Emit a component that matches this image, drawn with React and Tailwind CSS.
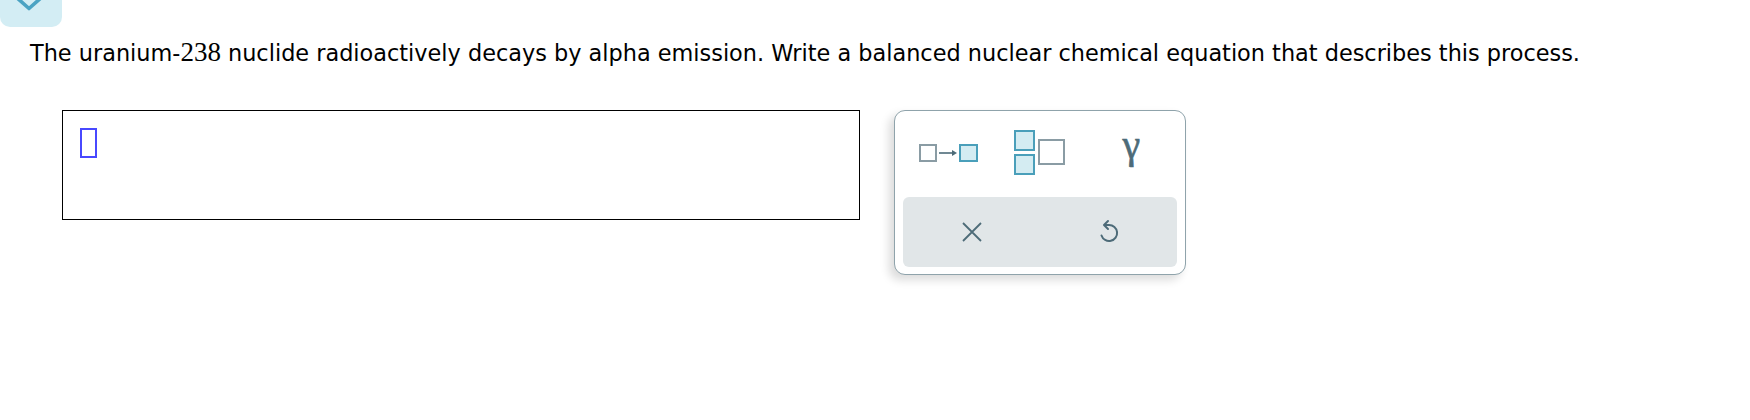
import React from 'react';

const ArrowIcon = () => (
  <svg width="60" height="20" viewBox="0 0 60 20">
    <rect x="1" y="2" width="16" height="16" fill="#fff" stroke="#8a9ca4" strokeWidth="2" />
    <line x1="20" y1="10" x2="35" y2="10" stroke="#4d6b78" strokeWidth="1.6" />
    <path d="M33 7 L38 10 L33 13 Z" fill="#4d6b78" />
    <rect x="41" y="2" width="17" height="16" fill="#d4ecf2" stroke="#4a9fba" strokeWidth="2" />
  </svg>
);

const MixedIcon = () => (
  <svg width="52" height="46" viewBox="0 0 52 46">
    <rect x="1" y="1" width="19" height="19" fill="#d4ecf2" stroke="#4a9fba" strokeWidth="2" />
    <rect x="1" y="25" width="19" height="19" fill="#d4ecf2" stroke="#4a9fba" strokeWidth="2" />
    <rect x="25" y="10" width="25" height="24" fill="#fff" stroke="#8a9ca4" strokeWidth="2" />
  </svg>
);

const CloseIcon = () => (
  <svg width="22" height="22" viewBox="0 0 22 22">
    <path d="M2 2 L20 20 M20 2 L2 20" stroke="#4d6b78" strokeWidth="1.8" fill="none" />
  </svg>
);

const UndoIcon = () => (
  <svg width="24" height="26" viewBox="0 0 24 26">
    <path d="M8 6 H12 A8 8 0 1 1 4.5 16.5" stroke="#4d6b78" strokeWidth="2" fill="none" strokeLinecap="round" />
    <path d="M11 2 L7 6 L11 10" stroke="#4d6b78" strokeWidth="2" fill="none" strokeLinecap="round" strokeLinejoin="round" />
  </svg>
);

export default function App() {
  return (
    <div className="w-[1750px] h-[420px] bg-white [font-family:'DejaVu_Sans',sans-serif] text-black overflow-hidden">
      {/* menu tab */}
      <div className="w-[62px] h-[27px] bg-[#d3edf4] rounded-b-[10px] flex justify-center overflow-hidden">
        <svg width="30" height="12" viewBox="0 0 30 12" className="-ml-[4px]">
          <path d="M2 -3 L15 8.5 L28 -3" stroke="#4ba3c3" strokeWidth="3.6" fill="none" strokeLinecap="round" strokeLinejoin="round" />
        </svg>
      </div>

      <p className="ml-[30px] mt-[12px] text-[22.4px] leading-[26px]">
        The uranium-<span className="[font-family:'Liberation_Serif',serif] text-[27px]">238</span> nuclide radioactively decays by alpha emission. Write a balanced nuclear chemical equation that describes this process.
      </p>

      <div className="flex items-start ml-[62px] mt-[44px] gap-[34px]">
        {/* answer box */}
        <div className="w-[798px] h-[110px] border border-black pt-[17px] pl-[17px]">
          <div className="w-[17px] h-[30px] border-2 border-[#4848ff]" />
        </div>

        {/* palette */}
        <div className="w-[292px] h-[165px] border border-[#8fa3ab] rounded-[11px] bg-white p-[8px] shadow-[-5px_5px_10px_rgba(0,0,0,0.14)]">
          <div className="grid grid-cols-3 h-[68px] mb-[10px] items-center justify-items-center">
            <ArrowIcon />
            <MixedIcon />
            <span className="[font-family:'Liberation_Serif',serif] text-[40px] leading-none text-[#4d6b78] -mt-[16px] [-webkit-text-stroke:0.6px_#4d6b78]">γ</span>
          </div>
          <div className="grid grid-cols-2 h-[70px] bg-[#e1e6e8] rounded-[6px] items-center justify-items-center">
            <CloseIcon />
            <UndoIcon />
          </div>
        </div>
      </div>
    </div>
  );
}
